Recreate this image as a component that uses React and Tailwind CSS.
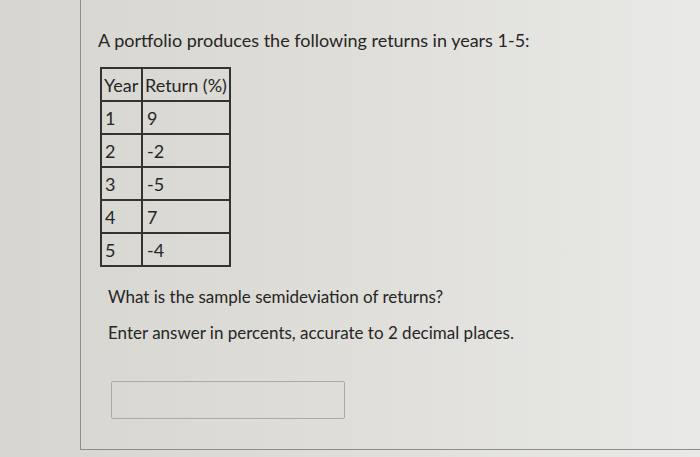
import React from "react";

const rows = [
    ["1", "9"],
    ["2", "-2"],
    ["3", "-5"],
    ["4", "7"],
    ["5", "-4"],
];

const App = () => {
    return (
        <div
            className="w-[700px] h-[457px] overflow-hidden flex bg-gradient-to-r from-[#d6d5cf] via-[#dfded9] to-[#e9e9e7] text-[#262626]"
            style={{ fontFamily: "Lato, 'Open Sans', sans-serif" }}
        >
            {/* Left gutter */}
            <div className="w-[80px] shrink-0" />

            {/* Question panel */}
            <div className="flex-1 h-[450px] border-l border-b border-[#8d8c88] pl-[17px] pt-[26px]">
                <h1 className="text-[18px] leading-[28px]">
                    A portfolio produces the following returns in years 1-5:
                </h1>

                {/* Data table */}
                <table className="mt-[13px] ml-[2px] border-collapse text-[18px] leading-none">
                    <thead>
                        <tr>
                            <th className="border-2 border-[#333] h-[33px] w-[41px] px-[2px] text-left font-normal">
                                Year
                            </th>
                            <th className="border-2 border-[#333] h-[33px] w-[88px] px-[2px] text-left font-normal">
                                Return (%)
                            </th>
                        </tr>
                    </thead>
                    <tbody>
                        {rows.map(([year, ret]) => (
                            <tr key={year}>
                                <td className="border-2 border-[#333] h-[33px] px-[3px]">{year}</td>
                                <td className="border-2 border-[#333] h-[33px] px-[4px]">{ret}</td>
                            </tr>
                        ))}
                    </tbody>
                </table>

                <div className="pl-[10px] text-[17px]">
                    <p className="mt-[19px] leading-[22px]">What is the sample semideviation of returns?</p>
                    <p className="mt-[14px] leading-[22px]">
                        Enter answer in percents, accurate to 2 decimal places.
                    </p>
                    <input
                        type="text"
                        className="mt-[37px] ml-[3px] block w-[234px] h-[38px] border-[1.5px] border-[#a9a9a5] rounded-[2px] bg-transparent outline-none"
                    />
                </div>
            </div>
        </div>
    );
};

export default App;
